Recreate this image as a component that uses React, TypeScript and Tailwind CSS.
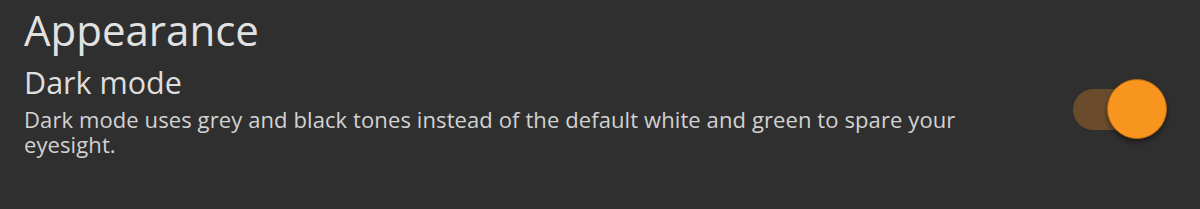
export default function App() {
  return (
    <div
      className="w-[1200px] h-[209px] bg-[#2f2f2f] flex items-start justify-between pl-6 pr-[33px] pt-[6px]"
      style={{ fontFamily: '"Open Sans", "Noto Sans", sans-serif' }}
    >
      <div className="flex flex-col">
        <h1 className="text-[42px] leading-[48px] text-[#e2e2e2]">Appearance</h1>
        <h2 className="text-[30.5px] leading-[36px] text-[#dedede] mt-[10px]">Dark mode</h2>
        <p className="text-[22px] leading-[25px] tracking-[0.1px] text-[#d2d2d2] w-[980px] mt-[7px]">
          Dark mode uses grey and black tones instead of the default white and green to spare your eyesight.
        </p>
      </div>
      <div className="relative mt-[73px] w-[94px] h-[60px] flex items-center">
        <div className="w-[76px] h-[41px] rounded-full bg-[#6a4c2d]" />
        <div className="absolute right-0 top-0 w-[60px] h-[60px] rounded-full bg-[#f7951f] border border-[#b86a10] shadow-[0_3px_5px_rgba(0,0,0,0.45)]" />
      </div>
    </div>
  );
}
